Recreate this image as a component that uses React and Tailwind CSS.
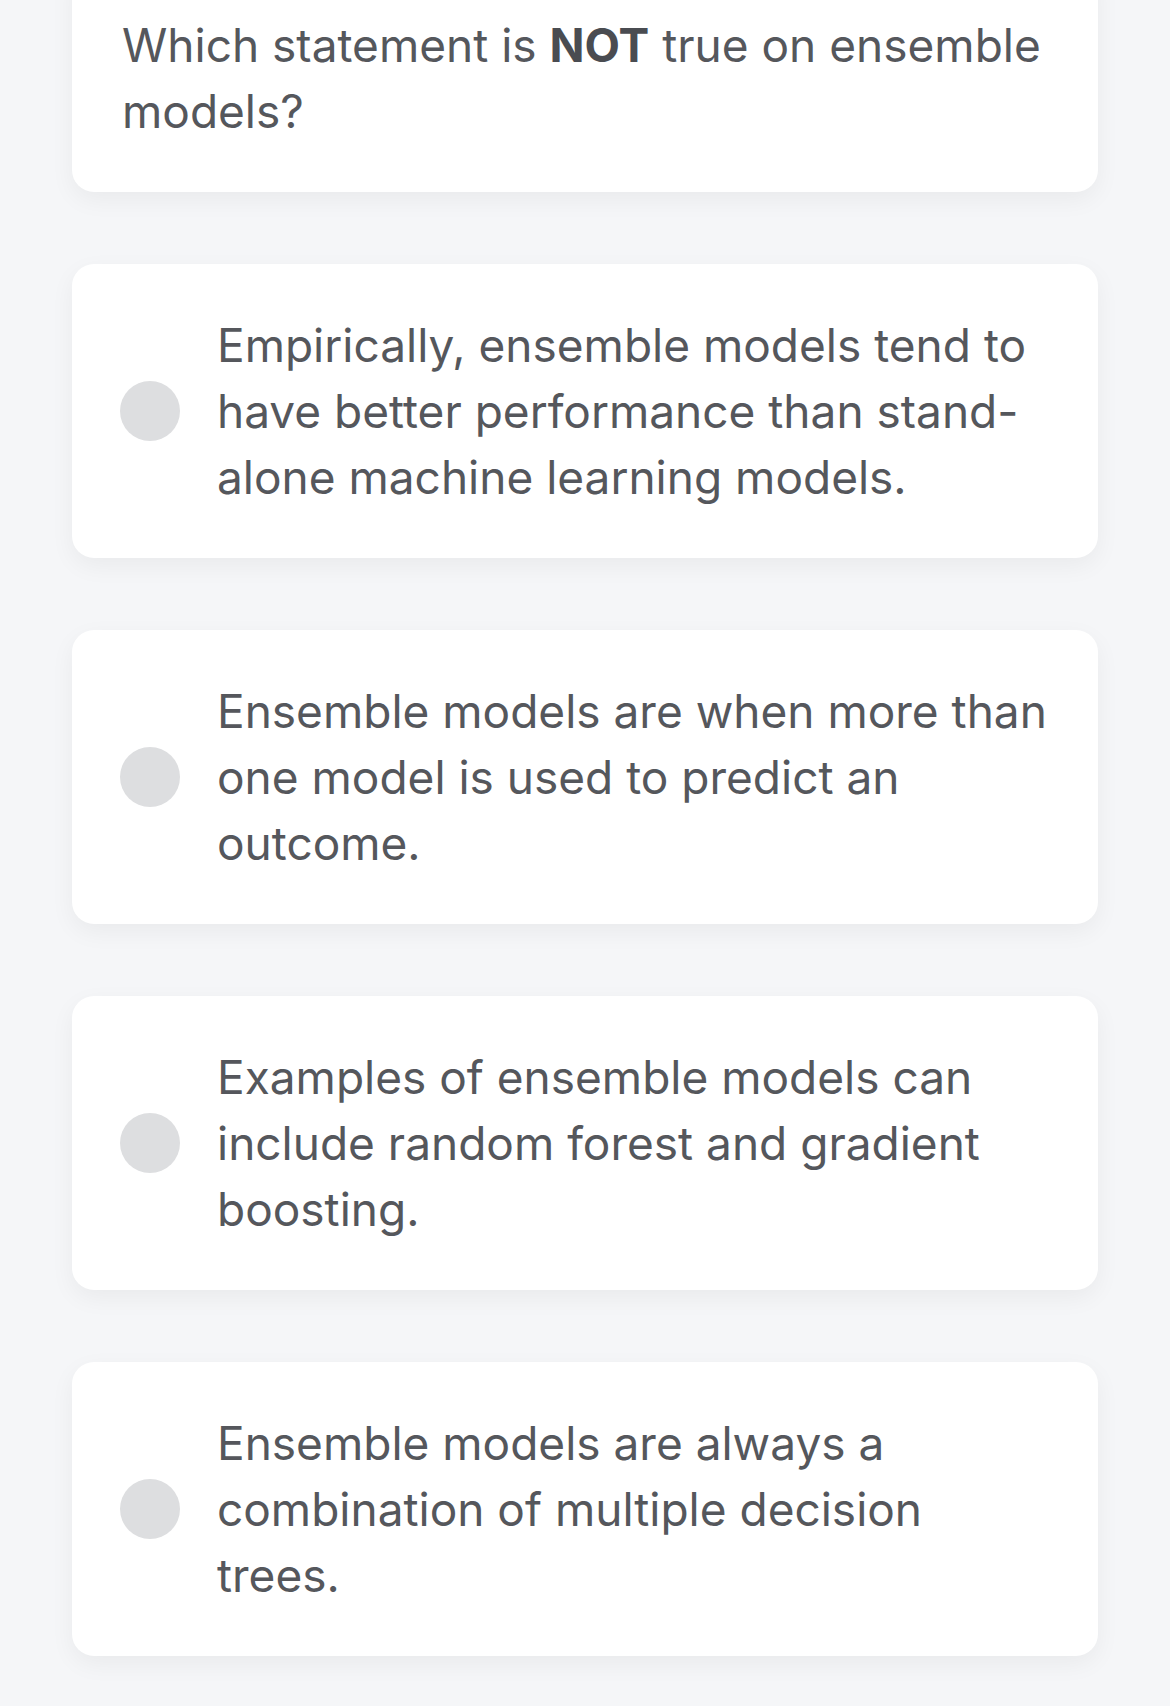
import React from "react";

const OPTIONS = [
    "Empirically, ensemble models tend to have better performance than stand-alone machine learning models.",
    "Ensemble models are when more than one model is used to predict an outcome.",
    "Examples of ensemble models can include random forest and gradient boosting.",
    "Ensemble models are always a combination of multiple decision trees.",
];

export default function App() {
    return (
        <div
            className="flex h-[1706px] flex-col overflow-hidden bg-[#f5f6f8] px-[72px] text-[46px] leading-[66px] text-[#55575c]"
            style={{ fontFamily: "Inter, 'Noto Sans', sans-serif" }}
        >
            {/* Question card (scrolled partly off top) */}
            <div className="-mt-[36px] rounded-[22px] bg-white px-[50px] pt-[48px] pb-[48px] shadow-[0_8px_24px_rgba(0,0,0,0.05)]">
                <p>
                    Which statement is <span className="font-bold text-[#4a4c51]">NOT</span> true on ensemble models?
                </p>
            </div>

            <div className="mt-[72px] flex flex-col gap-[72px]">
                {OPTIONS.map((text, i) => (
                    <div
                        key={i}
                        className="flex items-center gap-[37px] rounded-[22px] bg-white py-[48px] pl-[48px] pr-[48px] shadow-[0_8px_24px_rgba(0,0,0,0.05)]"
                    >
                        <span className="h-[60px] w-[60px] flex-shrink-0 rounded-full bg-[#dddee0]" />
                        <p className="min-w-0 flex-1">{text}</p>
                    </div>
                ))}
            </div>
        </div>
    );
}
